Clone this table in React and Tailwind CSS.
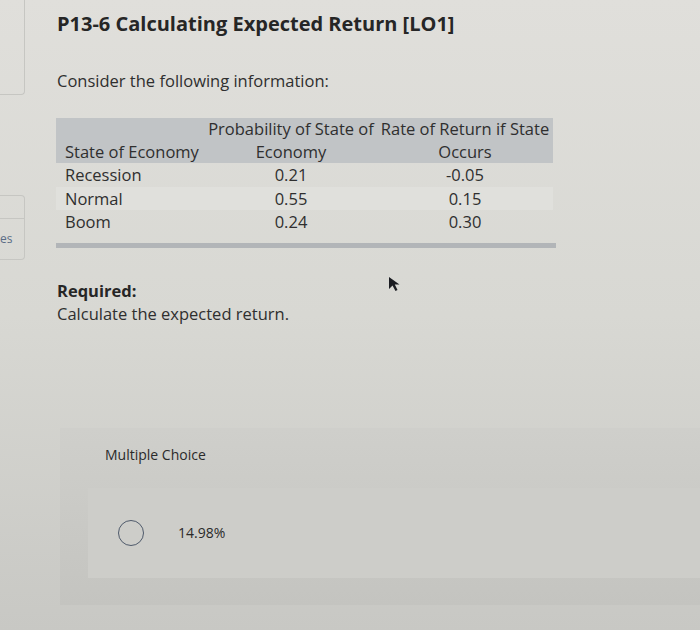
import React from 'react';

const rows = [
  { state: 'Recession', prob: '0.21', ret: '-0.05', stripe: false },
  { state: 'Normal', prob: '0.55', ret: '0.15', stripe: true },
  { state: 'Boom', prob: '0.24', ret: '0.30', stripe: false },
];

function Cursor() {
  return (
    <svg width="14" height="16" viewBox="0 0 14 16" className="absolute left-[388px] top-[276px]">
      <path d="M1 1 L1 13 L4.5 9.5 L7.5 15 L9.5 14 L6.8 8.6 L11.5 8.4 Z" fill="#1b1d22" />
    </svg>
  );
}

export default function App() {
  return (
    <div
      className="relative w-[700px] h-[630px] overflow-hidden bg-linear-to-b from-[#e0dfdb] via-[#d8d8d3] to-[#c8c8c4] text-[#2b2b2b]"
      style={{ fontFamily: '"Open Sans", Lato, Arial, sans-serif' }}
    >
      <div className="flex h-full">
        {/* left rail */}
        <div className="w-[25px] shrink-0 flex flex-col">
          <div className="h-[95px] border border-l-0 border-t-0 border-[#c6c6c2] rounded-br-[4px]" />
          <div className="mt-[100px] h-[65px] border border-l-0 border-[#c6c6c2] rounded-r-[4px] flex flex-col">
            <div className="h-[23px] border-b border-[#c6c6c2]" />
            <div className="flex-1 flex items-center text-[12px] text-[#5b6d86]">es</div>
          </div>
        </div>

        {/* main */}
        <div className="flex-1 flex flex-col">
          <div className="pl-[32px] pt-[10px]">
            <h1 className="text-[20px] font-bold leading-[28px] text-[#262626]">
              P13-6 Calculating Expected Return [LO1]
            </h1>
            <p className="mt-[32px] text-[16.5px] leading-[22px] text-[#2f2f2f]">Consider the following information:</p>

            <div className="mt-[26px] w-[497px] ml-[-1px] text-[16.5px] text-[#2f2f2f]">
              <div className="bg-[#c1c4c6] grid grid-cols-[149px_172px_176px] leading-[22.5px]">
                <div className="flex items-end pl-[9px]">State of Economy</div>
                <div className="text-center whitespace-nowrap">Probability of State of<br />Economy</div>
                <div className="text-center whitespace-nowrap">Rate of Return if State<br />Occurs</div>
              </div>
              {rows.map((r) => (
                <div
                  key={r.state}
                  className={`grid grid-cols-[149px_172px_176px] h-[23.5px] items-center ${r.stripe ? 'bg-[#e0e0dc]' : ''}`}
                >
                  <div className="pl-[9px]">{r.state}</div>
                  <div className="text-center">{r.prob}</div>
                  <div className="text-center">{r.ret}</div>
                </div>
              ))}
              <div className="mt-[9px] h-[5px] w-[500px] bg-[#b2b5b8]" />
            </div>

            <div className="mt-[31px] text-[16.5px] leading-[23px] text-[#2f2f2f]">
              <div className="font-bold text-[#262626]">Required:</div>
              <div>Calculate the expected return.</div>
            </div>
          </div>

          {/* multiple choice card */}
          <div className="mt-[103px] ml-[35px] h-[177px] bg-linear-to-b from-[#cfcfcb] to-[#c4c4c0] flex flex-col">
            <div className="pl-[45px] pt-[17px] text-[14px] leading-[20px] text-[#2a2a2a]">Multiple Choice</div>
            <div className="mt-[23px] ml-[28px] h-[90px] bg-[#cdcdc9] flex items-center">
              <span className="ml-[30px] w-[26px] h-[26px] rounded-full border-[1.5px] border-[#4f5a6b]" />
              <span className="ml-[34px] text-[14px] text-[#2a2a2a]">14.98%</span>
            </div>
          </div>
        </div>
      </div>
      <Cursor />
    </div>
  );
}
